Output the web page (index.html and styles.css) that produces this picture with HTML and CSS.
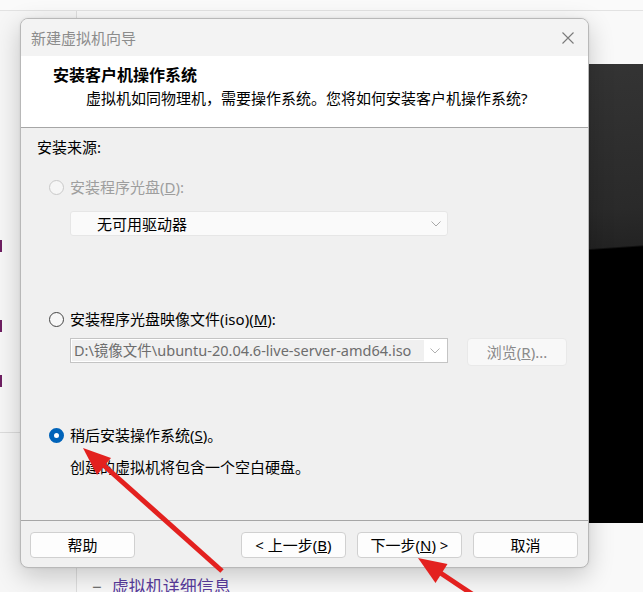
FILE: index.html
```html
<!DOCTYPE html>
<html lang="zh-CN">
<head>
<meta charset="utf-8">
<title>新建虚拟机向导</title>
<link rel="stylesheet" href="styles.css">
</head>
<body>
<div class="screen">
  <div class="app">
    <div class="topbar"></div>
    <div class="app-body">
      <aside class="sidebar">
        <span class="mark mark-1"></span>
        <span class="mark mark-2"></span>
        <span class="mark mark-3"></span>
        <div class="side-sep"></div>
      </aside>
      <main class="main">
        <div class="vm-preview"></div>
        <div class="details-head"><span class="dash">−</span><span class="details-title">虚拟机详细信息</span></div>
      </main>
    </div>
  </div>

  <section class="dialog">
    <header class="titlebar">
      <span class="title">新建虚拟机向导</span>
      <svg class="close" width="12" height="12" viewBox="0 0 12 12"><path d="M0.5 0.5 L11.5 11.5 M11.5 0.5 L0.5 11.5" stroke="#7a7a7a" stroke-width="1.1" fill="none"/></svg>
    </header>
    <div class="banner">
      <div class="banner-title">安装客户机操作系统</div>
      <div class="banner-sub">虚拟机如同物理机，需要操作系统。您将如何安装客户机操作系统?</div>
    </div>
    <div class="content">
      <div class="label">安装来源:</div>

      <div class="radio-row row-disc disabled">
        <span class="radio radio-disabled"></span>
        <span>安装程序光盘(<u>D</u>):</span>
      </div>
      <div class="select select-drive">
        <span class="select-text">无可用驱动器</span>
        <svg class="chev" width="10" height="6" viewBox="0 0 10 6"><path d="M0.5 0.5 L5 5 L9.5 0.5" stroke="#a8a8a8" stroke-width="1" fill="none"/></svg>
      </div>

      <div class="radio-row row-iso">
        <span class="radio"></span>
        <span>安装程序光盘映像文件(iso)(<u>M</u>):</span>
      </div>
      <div class="iso-line">
        <div class="combo">
          <span class="combo-text">D:\镜像文件\ubuntu-20.04.6-live-server-amd64.iso</span>
          <span class="combo-btn"><svg width="10" height="6" viewBox="0 0 10 6"><path d="M0.5 0.5 L5 5 L9.5 0.5" stroke="#b0b0b0" stroke-width="1" fill="none"/></svg></span>
        </div>
        <div class="browse">浏览(<u>R</u>)...</div>
      </div>

      <div class="radio-row row-later">
        <span class="radio radio-checked"></span>
        <span>稍后安装操作系统(<u>S</u>)。</span>
      </div>
      <div class="desc">创建的虚拟机将包含一个空白硬盘。</div>
    </div>
    <footer class="footer">
      <div class="btn">帮助</div>
      <div class="btn btn-back">&lt; 上一步(<u>B</u>)</div>
      <div class="btn">下一步(<u>N</u>) &gt;</div>
      <div class="btn">取消</div>
    </footer>
  </section>

  <svg class="arrows" width="643" height="599" viewBox="0 0 643 599">
    <line x1="222" y1="571" x2="100" y2="462" stroke="#e3211f" stroke-width="5" stroke-linecap="butt"/>
    <polygon points="83,448 111,458 97,475" fill="#e3211f"/>
    <line x1="478" y1="598" x2="436" y2="570" stroke="#e3211f" stroke-width="5"/>
    <polygon points="418,558 447.5,564 435.5,583" fill="#e3211f"/>
  </svg>
</div>
</body>
</html>
```
FILE: styles.css
```css
html, body {
  margin: 0;
  padding: 0;
  background: #ffffff;
}

body {
  font-family: "Noto Sans", "Noto Sans CJK SC", sans-serif;
  font-size: 15px;
  color: #000;
}

.screen {
  position: relative;
  width: 643px;
  height: 592px;
  overflow: hidden;
  background: #f8f8f8;
}

/* background application */
.app {
  display: flex;
  flex-direction: column;
  height: 100%;
}

.topbar {
  flex: none;
  height: 10px;
  border-bottom: 1px solid #e2e2e2;
  background: #fafafa;
}

.app-body {
  flex: 1;
  min-height: 0;
  display: flex;
  overflow: hidden;
}

.sidebar {
  position: relative;
  width: 76px;
  border-right: 1px solid #dedede;
  background: #f6f6f6;
}

.mark {
  position: absolute;
  left: 0;
  width: 2px;
  height: 12px;
  background: #6e1f62;
}
.mark-1 { top: 229px; }
.mark-2 { top: 309px; }
.mark-3 { top: 364px; }

.side-sep {
  margin-top: 421px;
  height: 1px;
  background: #dcdcdc;
}

.main {
  flex: 1;
  display: flex;
  flex-direction: column;
  background: #f9f9f9;
}

.vm-preview {
  flex: none;
  align-self: flex-end;
  width: 110px;
  height: 459px;
  margin-top: 53px;
  background: linear-gradient(176deg, #343434 0, #2a2a2a 150px, #232323 188px, #000 190px, #000 100%);
}

.details-head {
  flex: none;
  display: flex;
  align-items: center;
  gap: 10px;
  margin-top: 52px;
  padding-left: 15px;
  color: #5a3c9e;
  font-size: 17px;
  line-height: 24px;
}

.dash {
  color: #555;
}

/* dialog window */
.dialog {
  position: absolute;
  left: 20px;
  top: 18px;
  width: 569px;
  height: 550px;
  box-sizing: border-box;
  border: 1px solid #b8b8b8;
  border-radius: 8px;
  background: #f0f0f0;
  box-shadow: 0 8px 26px rgba(0, 0, 0, 0.2), 0 0 3px rgba(0, 0, 0, 0.08);
  overflow: hidden;
  display: flex;
  flex-direction: column;
}

.titlebar {
  height: 37px;
  display: flex;
  align-items: center;
  justify-content: space-between;
  padding: 0 14px 0 10px;
  background: #f3f3f3;
}

.title {
  color: #8c8c8c;
  font-size: 15px;
  line-height: 20px;
}

.close {
  display: block;
}

.banner {
  box-sizing: border-box;
  border-bottom: 1px solid #a6a6a6;
  background: #ffffff;
  padding-top: 9px;
  height: 72px;
}

.banner-title {
  padding-left: 32px;
  font-size: 16px;
  font-weight: bold;
  line-height: 20px;
}

.banner-sub {
  margin-top: 3px;
  padding-left: 65px;
  line-height: 20px;
}

.content {
  flex: 1;
  padding: 9px 0 0 16px;
}

.label {
  line-height: 20px;
}

.radio-row {
  display: flex;
  align-items: center;
  gap: 6px;
  margin-left: 12px;
  line-height: 20px;
}

.row-disc { margin-top: 20px; }
.row-iso { margin-top: 73px; }
.row-later { margin-top: 59px; }

.disabled {
  color: #9e9e9e;
}

.radio {
  width: 15px;
  height: 15px;
  box-sizing: border-box;
  border-radius: 50%;
  border: 1px solid #444;
  background: #f7f7f7;
  flex: none;
}

.radio-disabled {
  border-color: #c9c9c9;
  background: #f6f6f6;
}

.radio-checked {
  border: 5px solid #0063b9;
  background: #ffffff;
}

.select {
  margin: 14px 0 0 33px;
  width: 378px;
  height: 25px;
  box-sizing: border-box;
  border: 1px solid #e6e6e6;
  border-radius: 3px;
  background: #fafafa;
  display: flex;
  align-items: center;
  justify-content: space-between;
  padding: 0 6px 0 26px;
}

.select-text {
  line-height: 20px;
}

.chev {
  display: block;
}

.iso-line {
  display: flex;
  align-items: flex-start;
  gap: 19px;
  margin: 9px 0 0 33px;
}

.combo {
  width: 378px;
  height: 25px;
  box-sizing: border-box;
  border: 1px solid #c4c4c4;
  background: #ffffff;
  display: flex;
  padding: 1px;
}

.combo-text {
  flex: 1;
  background: #f0f0f0;
  color: #6d6d6d;
  line-height: 21px;
  padding-left: 2px;
  white-space: nowrap;
  overflow: hidden;
  font-size: 14.5px;
}

.combo-btn {
  width: 22px;
  display: flex;
  align-items: center;
  justify-content: center;
}

.browse {
  width: 100px;
  height: 28px;
  box-sizing: border-box;
  border: 1px solid #e9e9e9;
  border-radius: 4px;
  background: #f8f8f8;
  color: #8a8a8a;
  display: flex;
  align-items: center;
  justify-content: center;
  line-height: 20px;
}

.desc {
  margin: 12px 0 0 33px;
  line-height: 20px;
}

.footer {
  border-top: 1px solid #a6a6a6;
  height: 47px;
  box-sizing: border-box;
  display: flex;
  align-items: flex-start;
  gap: 11px;
  padding: 11px 10px 0 9px;
}

.btn {
  width: 105px;
  height: 26px;
  box-sizing: border-box;
  border: 1px solid #d0d0d0;
  border-radius: 4px;
  background: #fdfdfd;
  display: flex;
  align-items: center;
  justify-content: center;
  line-height: 20px;
}

.btn-back {
  margin-left: auto;
}

.arrows {
  position: absolute;
  left: 0;
  top: 0;
  pointer-events: none;
}
```
